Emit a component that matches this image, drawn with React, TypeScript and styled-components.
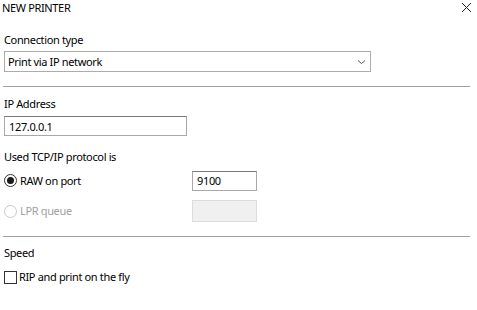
import React from "react";
import styled, { createGlobalStyle } from "styled-components";

const GlobalStyle = createGlobalStyle`
  html, body {
    margin: 0;
    padding: 0;
    background: #ffffff;
  }
  body {
    font-family: "Segoe UI", "Noto Sans", "Open Sans", sans-serif;
    font-size: 11px;
    letter-spacing: -0.35px;
    color: #000000;
  }
`;

const Dialog = styled.div`
  width: 477px;
  height: 310px;
  background: #ffffff;
  overflow: hidden;
`;

const Header = styled.div`
  display: flex;
  justify-content: space-between;
  align-items: center;
  height: 16px;
  padding: 0 5px 0 2px;
`;

const Title = styled.span`
  line-height: 16px;
`;

const CloseButton = styled.button`
  display: flex;
  align-items: center;
  justify-content: center;
  width: 11px;
  height: 11px;
  padding: 0;
  border: 0;
  background: transparent;
  margin-top: -1px;
`;

const Body = styled.div`
  padding: 16px 7px 0 4px;
`;

const Label = styled.div<{ $gap?: number }>`
  line-height: 16px;
  margin-top: ${(p) => p.$gap ?? 0}px;
`;

const SelectBox = styled.div`
  display: flex;
  align-items: center;
  justify-content: space-between;
  box-sizing: border-box;
  width: 367px;
  height: 21px;
  margin-top: 3px;
  padding: 0 4px 0 3px;
  border: 1px solid #acacac;
  background: #ffffff;
`;

const Separator = styled.hr<{ $gap: number }>`
  height: 1px;
  border: 0;
  margin: ${(p) => p.$gap}px 0 0 -1px;
  background: #a0a0a0;
`;

const TextBox = styled.div<{ $width: number; $disabled?: boolean; $gap?: number }>`
  display: flex;
  align-items: center;
  box-sizing: border-box;
  width: ${(p) => p.$width}px;
  height: ${(p) => (p.$disabled ? 22 : 20)}px;
  margin-top: ${(p) => p.$gap ?? 0}px;
  padding: 0 4px;
  border: 1px solid ${(p) => (p.$disabled ? "#dcdcdc" : "#a8a8a8")};
  border-top-color: ${(p) => (p.$disabled ? "#dcdcdc" : "#7a7a7a")};
  background: ${(p) => (p.$disabled ? "#f0f0f0" : "#ffffff")};
`;

const OptionRow = styled.div<{ $gap: number }>`
  display: grid;
  grid-template-columns: 188px 65px;
  align-items: center;
  height: 21px;
  margin-top: ${(p) => p.$gap}px;
`;

const Choice = styled.label<{ $disabled?: boolean }>`
  display: flex;
  align-items: center;
  gap: 3px;
  line-height: 16px;
  color: ${(p) => (p.$disabled ? "#a0a0a0" : "#000000")};
`;

const Radio = styled.span<{ $checked?: boolean; $disabled?: boolean }>`
  display: inline-flex;
  align-items: center;
  justify-content: center;
  box-sizing: border-box;
  width: 13px;
  height: 13px;
  border-radius: 50%;
  border: 1px solid ${(p) => (p.$disabled ? "#c8c8c8" : "#333333")};
  background: #ffffff;

  &::after {
    content: "";
    display: ${(p) => (p.$checked ? "block" : "none")};
    width: 7px;
    height: 7px;
    border-radius: 50%;
    background: #1a1a1a;
  }
`;

const Checkbox = styled.span`
  display: inline-block;
  box-sizing: border-box;
  width: 13px;
  height: 13px;
  border: 1px solid #333333;
  background: #ffffff;
`;

const CheckRow = styled(Choice)`
  margin-top: 8px;
  gap: 2px;
`;

const Chevron = () => (
  <svg width="9" height="6" viewBox="0 0 9 6">
    <path d="M1 1.5 L4.5 4.5 L8 1.5" fill="none" stroke="#555" strokeWidth="1" />
  </svg>
);

const CloseIcon = () => (
  <svg width="11" height="11" viewBox="0 0 11 11">
    <path d="M1 1 L10 10 M10 1 L1 10" stroke="#222" strokeWidth="1" />
  </svg>
);

export default function App() {
  return (
    <>
      <GlobalStyle />
      <Dialog>
        <Header>
          <Title>NEW PRINTER</Title>
          <CloseButton aria-label="Close">
            <CloseIcon />
          </CloseButton>
        </Header>
        <Body>
          <Label>Connection type</Label>
          <SelectBox>
            <span>Print via IP network</span>
            <Chevron />
          </SelectBox>

          <Separator $gap={14} />

          <Label $gap={9}>IP Address</Label>
          <TextBox $width={183} $gap={4}>127.0.0.1</TextBox>

          <Label $gap={13}>Used TCP/IP protocol is</Label>
          <OptionRow $gap={5}>
            <Choice>
              <Radio $checked />
              RAW on port
            </Choice>
            <TextBox $width={65}>9100</TextBox>
          </OptionRow>
          <OptionRow $gap={9}>
            <Choice $disabled>
              <Radio $disabled />
              LPR queue
            </Choice>
            <TextBox $width={65} $disabled />
          </OptionRow>

          <Separator $gap={15} />

          <Label $gap={8}>Speed</Label>
          <CheckRow>
            <Checkbox />
            RIP and print on the fly
          </CheckRow>
        </Body>
      </Dialog>
    </>
  );
}
